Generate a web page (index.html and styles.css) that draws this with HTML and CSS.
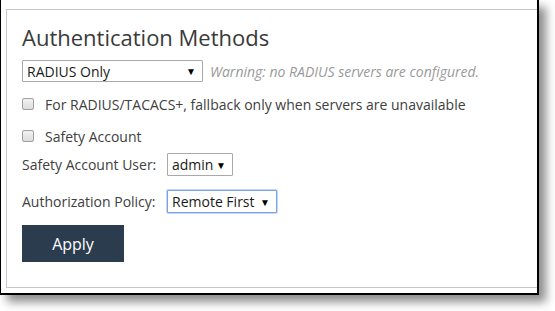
FILE: index.html
```html
<!DOCTYPE html>
<html>
<head>
<meta charset="utf-8">
<link rel="stylesheet" href="styles.css">
</head>
<body>
<div class="frame">
  <div class="panel">
    <h1 class="title">Authentication Methods</h1>
    <div class="row row-method">
      <div class="select select-method"><span>RADIUS Only</span><span class="arrow">▼</span></div>
      <span class="warning">Warning: no RADIUS servers are configured.</span>
    </div>
    <label class="check-row check-fallback"><span class="box"></span>For RADIUS/TACACS+, fallback only when servers are unavailable</label>
    <label class="check-row check-safety"><span class="box"></span>Safety Account</label>
    <div class="row field-row field-user">
      <span class="field-label">Safety Account User:</span>
      <div class="select select-user"><span>admin</span><span class="arrow">▼</span></div>
    </div>
    <div class="row field-row field-policy">
      <span class="field-label">Authorization Policy:</span>
      <div class="select select-policy"><span>Remote First</span><span class="arrow">▼</span></div>
    </div>
    <button class="apply">Apply</button>
  </div>
</div>
</body>
</html>
```
FILE: styles.css
```css
html, body {
  margin: 0;
  padding: 0;
  background: #ffffff;
}
body {
  font-family: "Open Sans", "Noto Sans", sans-serif;
  color: #404040;
  width: 555px;
  height: 311px;
  overflow: hidden;
}
.frame {
  box-sizing: border-box;
  width: 539px;
  height: 295px;
  border-left: 1px solid #000;
  border-right: 2px solid #000;
  border-bottom: 2px solid #000;
  background: #fff;
  padding: 9px 0 6px 5px;
  box-shadow: 7px 7px 9px rgba(0,0,0,0.45);
}
.panel {
  box-sizing: border-box;
  height: 279px;
  border: 1px solid #c3c8cc;
  border-right: none;
  padding: 12px 0 0 15px;
}
.title {
  margin: 0;
  font-weight: 400;
  font-size: 22px;
  line-height: 30px;
  height: 30px;
  color: #3a3a3a;
}
.row {
  display: flex;
  align-items: center;
}
.row-method {
  margin-top: 8px;
  height: 22px;
}
.select {
  box-sizing: border-box;
  display: flex;
  align-items: center;
  justify-content: space-between;
  height: 23px;
  border: 1px solid #a9a9a9;
  border-radius: 1px;
  padding: 0 6px 0 4px;
  font-size: 14px;
  color: #1a1a1a;
  background: #fff;
}
.arrow {
  font-size: 10px;
  color: #000;
}
.select-method {
  width: 181px;
  height: 22px;
}
.warning {
  margin-left: 7px;
  font-style: italic;
  font-size: 14px;
  color: #9a9a9a;
}
.check-row {
  display: flex;
  align-items: center;
  font-size: 14px;
  color: #404040;
  height: 20px;
}
.check-fallback {
  margin-top: 12px;
}
.check-safety {
  margin-top: 12px;
}
.box {
  box-sizing: border-box;
  width: 12px;
  height: 12px;
  border: 1px solid #a0a0a0;
  border-radius: 2px;
  background: linear-gradient(#f2f2f2, #dcdcdc);
  margin-right: 11px;
}
.field-row {
  font-size: 14px;
  height: 23px;
}
.field-label {
  width: 145px;
}
.field-user {
  margin-top: 7px;
}
.select-user {
  width: 66px;
}
.field-policy {
  margin-top: 14px;
}
.select-policy {
  width: 110px;
  border: 1px solid #7aa3e0;
  box-shadow: 0 0 0 1px #c4d7f4;
}
.apply {
  display: block;
  margin-top: 12px;
  width: 102px;
  height: 37px;
  border: none;
  background: #2c3c4f;
  color: #fff;
  font-family: "Open Sans", sans-serif;
  font-size: 16px;
  padding: 0;
}
```
